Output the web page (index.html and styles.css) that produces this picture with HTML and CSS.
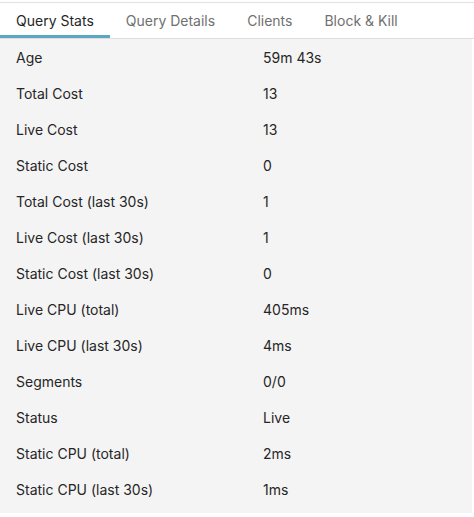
FILE: index.html
```html
<!DOCTYPE html>
<html>
<head>
<meta charset="utf-8">
<link rel="stylesheet" href="styles.css">
</head>
<body>
<div class="panel">
  <div class="tabs">
    <div class="tab active">Query Stats</div>
    <div class="tab">Query Details</div>
    <div class="tab">Clients</div>
    <div class="tab">Block &amp; Kill</div>
  </div>
  <div class="stats">
    <div class="row"><span class="label">Age</span><span class="value">59m 43s</span></div>
    <div class="row"><span class="label">Total Cost</span><span class="value">13</span></div>
    <div class="row"><span class="label">Live Cost</span><span class="value">13</span></div>
    <div class="row"><span class="label">Static Cost</span><span class="value">0</span></div>
    <div class="row"><span class="label">Total Cost (last 30s)</span><span class="value">1</span></div>
    <div class="row"><span class="label">Live Cost (last 30s)</span><span class="value">1</span></div>
    <div class="row"><span class="label">Static Cost (last 30s)</span><span class="value">0</span></div>
    <div class="row"><span class="label">Live CPU (total)</span><span class="value">405ms</span></div>
    <div class="row"><span class="label">Live CPU (last 30s)</span><span class="value">4ms</span></div>
    <div class="row"><span class="label">Segments</span><span class="value">0/0</span></div>
    <div class="row"><span class="label">Status</span><span class="value">Live</span></div>
    <div class="row"><span class="label">Static CPU (total)</span><span class="value">2ms</span></div>
    <div class="row"><span class="label">Static CPU (last 30s)</span><span class="value">1ms</span></div>
  </div>
</div>
</body>
</html>
```
FILE: styles.css
```css
html, body {
  margin: 0;
  padding: 0;
  background: #ffffff;
}
body {
  font-family: Inter, "Noto Sans", sans-serif;
  font-size: 14px;
  color: #262626;
}
.panel {
  width: 474px;
  padding-top: 2px;
}
.tabs {
  display: flex;
  border-top: 1px solid #e2e2e2;
  border-bottom: 1px solid #dedede;
  height: 35px;
}
.tab {
  padding: 0 16px;
  line-height: 35px;
  color: #707070;
  border-bottom: 3px solid transparent;
  height: 32px;
  margin-bottom: -1px;
}
.tab.active {
  color: #262626;
  border-bottom-color: #5aa7bf;
}
.stats {
  background: #f4f4f4;
  border-right: 2px solid #ffffff;
  padding-bottom: 6px;
}
.row {
  display: flex;
  height: 36px;
  align-items: center;
}
.label {
  width: 247px;
  padding-left: 16px;
}
.value {
  flex: 1;
}
```
